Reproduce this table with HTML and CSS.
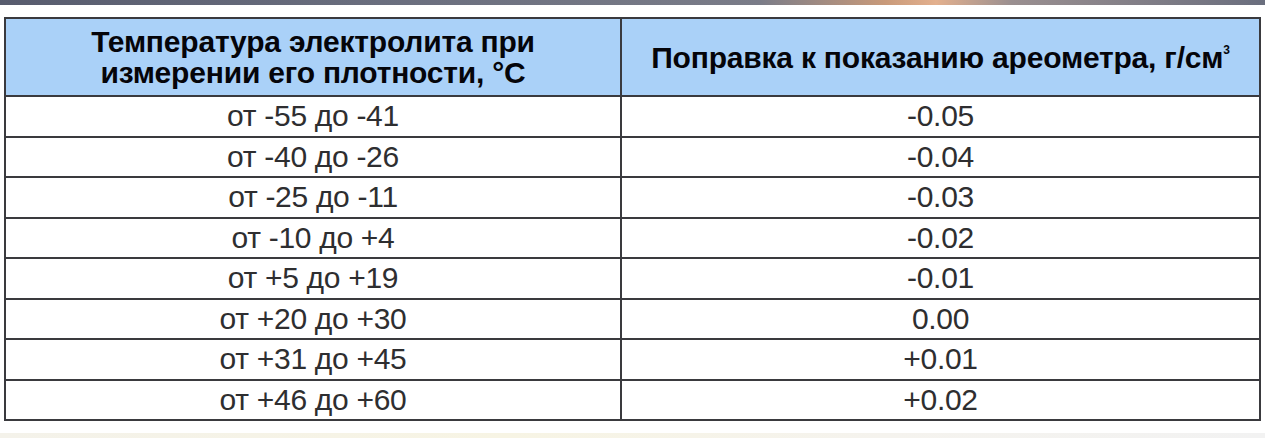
FILE: index.html
```html
<!DOCTYPE html>
<html lang="ru">
<head>
<meta charset="utf-8">
<title>Поправка к показанию ареометра</title>
<link rel="stylesheet" href="styles.css">
</head>
<body>
<div class="top-strip"></div>
<div class="wrap">
  <table class="tbl">
    <thead>
      <tr>
        <th class="col-a">Температура электролита при<br>измерении его плотности, °С</th>
        <th class="col-b">Поправка к показанию ареометра, г/см<sup>3</sup></th>
      </tr>
    </thead>
    <tbody>
      <tr><td>от -55 до -41</td><td>-0.05</td></tr>
      <tr><td>от -40 до -26</td><td>-0.04</td></tr>
      <tr><td>от -25 до -11</td><td>-0.03</td></tr>
      <tr><td>от -10 до +4</td><td>-0.02</td></tr>
      <tr><td>от +5 до +19</td><td>-0.01</td></tr>
      <tr><td>от +20 до +30</td><td>0.00</td></tr>
      <tr><td>от +31 до +45</td><td>+0.01</td></tr>
      <tr><td>от +46 до +60</td><td>+0.02</td></tr>
    </tbody>
  </table>
</div>
<div class="bottom-strip"></div>
</body>
</html>
```
FILE: styles.css
```css
html, body {
  margin: 0;
  padding: 0;
  background: #ffffff;
}
body {
  width: 1265px;
  height: 438px;
  overflow: hidden;
  font-family: "Liberation Sans", Arial, sans-serif;
}
.top-strip {
  height: 5px;
  background: linear-gradient(90deg, #585c6e 0%, #6a6e7e 30%, #7a7c88 60%, #c99a7a 70%, #e3b08e 74%, #9a8f90 80%, #6a6e7e 100%);
}
.wrap {
  padding: 12px 0 0 4px;
}
.tbl {
  border-collapse: collapse;
  width: 1257px;
  table-layout: fixed;
}
.tbl th,
.tbl td {
  border: 2px solid #3a3a3e;
  text-align: center;
  padding: 0;
  overflow: hidden;
  white-space: nowrap;
}
.tbl th {
  background: #aad1f8;
  color: #05050a;
  font-weight: bold;
  font-size: 30px;
  line-height: 31px;
  height: 76px;
  letter-spacing: -0.2px;
}
.tbl .col-a {
  width: 614px;
}
.tbl sup {
  font-size: 12px;
  vertical-align: 14px;
  line-height: 0;
}
.tbl td {
  height: 38.5px;
  font-size: 30px;
  line-height: 34px;
  color: #2e2e30;
  letter-spacing: -0.3px;
}
.bottom-strip {
  margin-top: 12px;
  height: 7px;
  background: linear-gradient(90deg, #f4f2ea 0%, #f7f4e4 40%, #f5f3ee 70%, #f2f2f2 100%);
}
```
